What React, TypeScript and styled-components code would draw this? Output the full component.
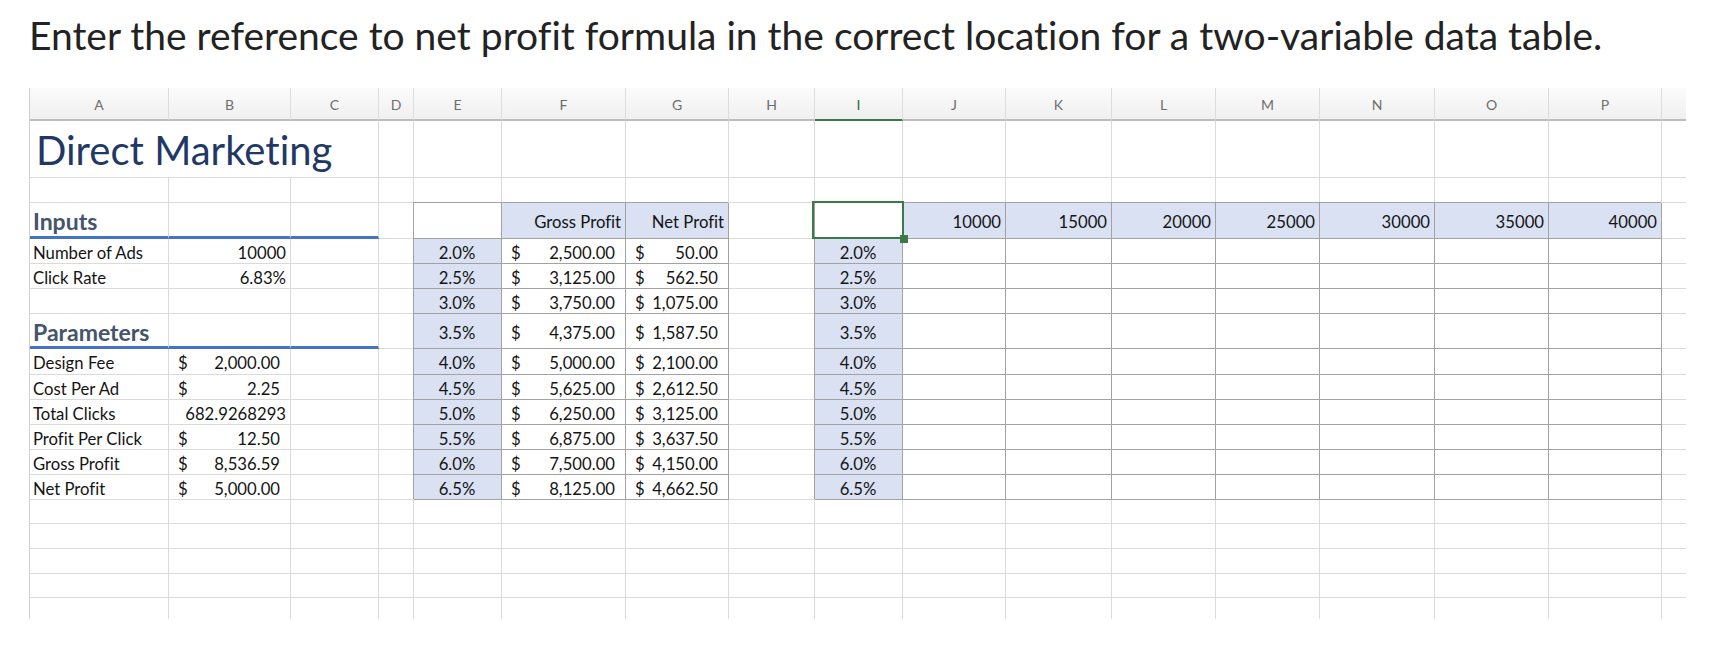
import React from 'react';
import styled, { createGlobalStyle, css } from 'styled-components';

const FILL = '#d9e1f2';
const GRID = '#dadada';
const DARK = '#a2a2a2';
const BLUE = '#4472c4';
const GREEN = '#3b7a47';

const COLS = [139, 122, 88, 35, 88, 124, 103, 86, 88, 103, 106, 104, 104, 115, 114, 113, 24];
const ROWS = [33, 57, 25, 36, 25, 25, 25, 35, 26, 25, 25, 25, 25, 25, 24, 25, 25, 24, 21];
const LETTERS = ['A', 'B', 'C', 'D', 'E', 'F', 'G', 'H', 'I', 'J', 'K', 'L', 'M', 'N', 'O', 'P', ''];

const GlobalStyle = createGlobalStyle`
  html, body { margin: 0; padding: 0; background: #fff; }
  body {
    font-family: Lato, "Liberation Sans", sans-serif;
    font-variant-ligatures: none;
    font-feature-settings: "liga" 0, "clig" 0;
  }
`;

const Page = styled.div`
  width: 1730px;
  height: 646px;
  overflow: hidden;
  box-sizing: border-box;
  padding-left: 29px;
`;

const Title = styled.h1`
  margin: 0;
  height: 88px;
  box-sizing: border-box;
  padding: 16px 0 0 0;
  font-family: Lato, sans-serif;
  font-weight: 400;
  font-size: 39px;
  line-height: 1;
  color: #222;
  white-space: nowrap;
`;

const Sheet = styled.div`
  display: grid;
  grid-template-columns: ${COLS.map((c) => `${c}px`).join(' ')};
  grid-template-rows: ${ROWS.map((r) => `${r}px`).join(' ')};
  width: max-content;
  border-left: 1px solid #cfcfcf;
  font-family: Lato, sans-serif;
`;

const ColHead = styled.div<{ $active?: boolean; $edge?: boolean }>`
  box-sizing: border-box;
  display: flex;
  align-items: center;
  justify-content: center;
  padding-top: 1px;
  background: linear-gradient(#fbfbfb, #f0f0f0);
  border-right: ${(p) => (p.$edge ? 'none' : '1px solid #dcdcdc')};
  border-bottom: 2px solid ${(p) => (p.$active ? GREEN : '#bdbdbd')};
  color: ${(p) => (p.$active ? '#2d6b3a' : '#6e6e6e')};
  font-size: 14px;
`;

type Align = 'left' | 'right' | 'center';

const Cell = styled.div<{
  $align?: Align;
  $fill?: boolean;
  $box?: boolean;
  $under?: boolean;
  $last?: boolean;
  $edge?: boolean;
  $acc?: boolean;
}>`
  position: relative;
  box-sizing: border-box;
  min-width: 0;
  display: flex;
  align-items: center;
  justify-content: ${(p) =>
    p.$acc ? 'space-between' : p.$align === 'right' ? 'flex-end' : p.$align === 'center' ? 'center' : 'flex-start'};
  padding: ${(p) => (p.$acc ? '3px 10px 0 9px' : '3px 4px 0 3px')};
  white-space: nowrap;
  font-size: 16.7px;
  color: #141414;
  background: ${(p) => (p.$fill ? FILL : '#fff')};
  border-right: ${(p) => (p.$edge ? 'none' : `1px solid ${p.$box ? DARK : GRID}`)};
  border-bottom: ${(p) =>
    p.$under ? `3px solid ${BLUE}` : p.$last ? 'none' : `1px solid ${p.$box ? DARK : GRID}`};
  ${(p) =>
    p.$box &&
    css`
      box-shadow: -1px -1px 0 ${DARK};
    `}
`;

const SheetTitle = styled(Cell)`
  grid-column: span 3;
  align-items: flex-end;
  padding: 0 0 3px 6px;
  font-size: 40px;
  color: #213866;
`;

const Section = styled.span`
  font-weight: 700;
  font-size: 23px;
  color: #44546a;
`;

const Selection = styled.div`
  position: absolute;
  top: -2px;
  left: -3px;
  right: -2px;
  bottom: -1px;
  border: 2px solid ${GREEN};
  z-index: 2;
  pointer-events: none;
`;

const Handle = styled.div`
  position: absolute;
  right: -6px;
  bottom: -6px;
  width: 8px;
  height: 8px;
  background: ${GREEN};
`;

type C = {
  t?: string;
  acc?: string;
  a?: Align;
  fill?: boolean;
  box?: boolean;
  under?: boolean;
  section?: boolean;
  sel?: boolean;
};

const pct = ['2.0%', '2.5%', '3.0%', '3.5%', '4.0%', '4.5%', '5.0%', '5.5%', '6.0%', '6.5%'];
const gross = ['2,500.00', '3,125.00', '3,750.00', '4,375.00', '5,000.00', '5,625.00', '6,250.00', '6,875.00', '7,500.00', '8,125.00'];
const net = ['50.00', '562.50', '1,075.00', '1,587.50', '2,100.00', '2,612.50', '3,125.00', '3,637.50', '4,150.00', '4,662.50'];
const ads = ['10000', '15000', '20000', '25000', '30000', '35000', '40000'];

const leftCells: [C, C][] = [
  [{ t: 'Number of Ads' }, { t: '10000', a: 'right' }],
  [{ t: 'Click Rate' }, { t: '6.83%', a: 'right' }],
  [{}, {}],
  [{ t: 'Parameters', section: true, under: true }, { under: true }],
  [{ t: 'Design Fee' }, { acc: '2,000.00' }],
  [{ t: 'Cost Per Ad' }, { acc: '2.25' }],
  [{ t: 'Total Clicks' }, { t: '682.9268293', a: 'right' }],
  [{ t: 'Profit Per Click' }, { acc: '12.50' }],
  [{ t: 'Gross Profit' }, { acc: '8,536.59' }],
  [{ t: 'Net Profit' }, { acc: '5,000.00' }],
];

const empty = (n: number): C[] => Array.from({ length: n }, () => ({}));

function buildRows(): C[][] {
  const rows: C[][] = [];
  rows.push(empty(17));
  rows.push([
    { t: 'Inputs', section: true, under: true },
    { under: true },
    { under: true },
    {},
    { box: true },
    { t: 'Gross Profit', a: 'right', fill: true, box: true },
    { t: 'Net Profit', a: 'right', fill: true, box: true },
    {},
    { box: true, sel: true },
    ...ads.map((v) => ({ t: v, a: 'right' as Align, fill: true, box: true })),
    {},
  ]);
  for (let i = 0; i < 10; i++) {
    const [a, b] = leftCells[i];
    rows.push([
      a,
      b,
      { under: i === 3 },
      {},
      { t: pct[i], a: 'center', fill: true, box: true },
      { acc: gross[i], box: true },
      { acc: net[i], box: true },
      {},
      { t: pct[i], a: 'center', fill: true, box: true },
      ...Array.from({ length: 7 }, () => ({ box: true })),
      {},
    ]);
  }
  for (let i = 0; i < 5; i++) rows.push(empty(17));
  return rows;
}

const bodyRows = buildRows();

export default function App() {
  return (
    <>
      <GlobalStyle />
      <Page>
        <Title>Enter the reference to net profit formula in the correct location for a two-variable data table.</Title>
        <Sheet>
          {LETTERS.map((l, i) => (
            <ColHead key={`h${i}`} $active={l === 'I'} $edge={i === LETTERS.length - 1}>
              {l}
            </ColHead>
          ))}
          <SheetTitle>Direct Marketing</SheetTitle>
          {empty(14).map((_, i) => (
            <Cell key={`t${i}`} $edge={i === 13} />
          ))}
          {bodyRows.map((row, r) =>
            row.map((c, ci) => (
              <Cell
                key={`${r}-${ci}`}
                $align={c.a}
                $fill={c.fill}
                $box={c.box}
                $under={c.under}
                $acc={!!c.acc}
                $last={r === bodyRows.length - 1}
                $edge={ci === 16}
              >
                {c.section ? <Section>{c.t}</Section> : c.t}
                {c.acc && (
                  <>
                    <span>$</span>
                    <span>{c.acc}</span>
                  </>
                )}
                {c.sel && (
                  <Selection>
                    <Handle />
                  </Selection>
                )}
              </Cell>
            ))
          )}
        </Sheet>
      </Page>
    </>
  );
}
